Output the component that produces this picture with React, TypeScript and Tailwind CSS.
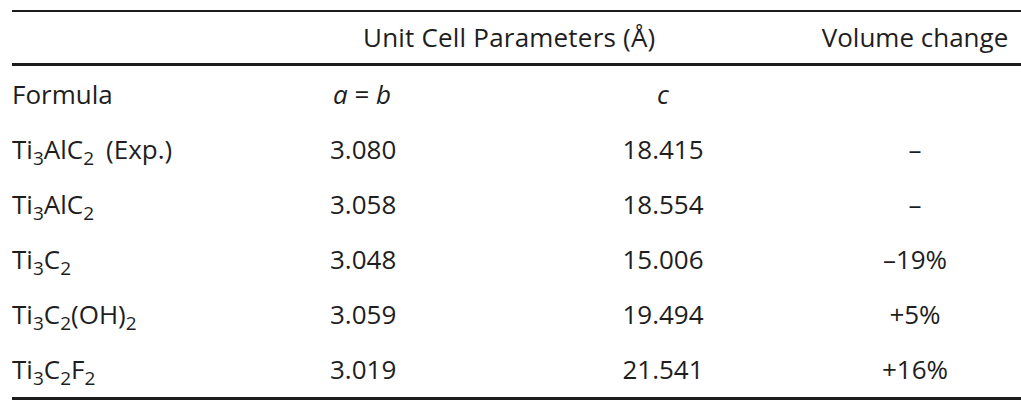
const S = ({ children }: { children: React.ReactNode }) => (
  <sub className="text-[19px] bottom-[-0.34em]">{children}</sub>
);

const ROWS: { formula: React.ReactNode; a: string; c: string; vol: string }[] = [
  {
    formula: (
      <>
        Ti<S>3</S>AlC<S>2</S>
        <span className="ml-[12px]">(Exp.)</span>
      </>
    ),
    a: "3.080",
    c: "18.415",
    vol: "–",
  },
  {
    formula: (
      <>
        Ti<S>3</S>AlC<S>2</S>
      </>
    ),
    a: "3.058",
    c: "18.554",
    vol: "–",
  },
  {
    formula: (
      <>
        Ti<S>3</S>C<S>2</S>
      </>
    ),
    a: "3.048",
    c: "15.006",
    vol: "–19%",
  },
  {
    formula: (
      <>
        Ti<S>3</S>C<S>2</S>(OH)<S>2</S>
      </>
    ),
    a: "3.059",
    c: "19.494",
    vol: "+5%",
  },
  {
    formula: (
      <>
        Ti<S>3</S>C<S>2</S>F<S>2</S>
      </>
    ),
    a: "3.019",
    c: "21.541",
    vol: "+16%",
  },
];

const COLS = "grid grid-cols-[318px_200px_266px_225px] items-center";

export default function App() {
  return (
    <div
      className="w-[1021px] h-[406px] bg-white pl-[12px] pt-[10px] text-[26px] text-[#1e1e1e] overflow-hidden"
      style={{ fontFamily: '"Open Sans", sans-serif' }}
    >
      <div className="border-t-2 border-b-[3px] border-[#1c1c1c]">
        {/* header */}
        <div className={`${COLS} h-[54px] border-b-[3px] border-[#1c1c1c]`}>
          <div />
          <div className="col-span-2 pl-[33px] whitespace-nowrap tracking-[0.2px]">Unit Cell Parameters (Å)</div>
          <div className="text-center pl-[13px] whitespace-nowrap">Volume change</div>
        </div>

        <div className={`${COLS} h-[56px]`}>
          <div>Formula</div>
          <div className="pl-[3px]">
            <i>a</i> = <i>b</i>
          </div>
          <div className="text-center">
            <i>c</i>
          </div>
          <div />
        </div>

        {ROWS.map((r) => (
          <div key={r.a} className={`${COLS} h-[55px]`}>
            <div className="whitespace-nowrap">{r.formula}</div>
            <div>{r.a}</div>
            <div className="text-center">{r.c}</div>
            <div className="text-center pl-[13px]">{r.vol}</div>
          </div>
        ))}
      </div>
    </div>
  );
}
